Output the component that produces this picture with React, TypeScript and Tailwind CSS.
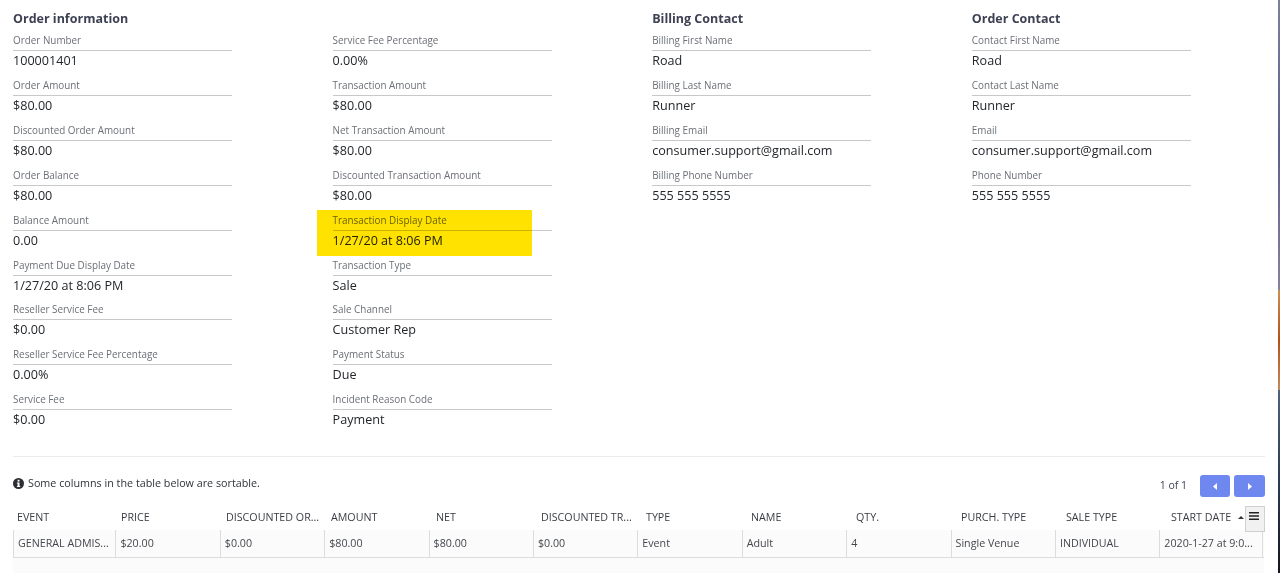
type Field = { label: string; value: string; mark?: boolean };

const orderInfo: Field[] = [
  { label: "Order Number", value: "100001401" },
  { label: "Order Amount", value: "$80.00" },
  { label: "Discounted Order Amount", value: "$80.00" },
  { label: "Order Balance", value: "$80.00" },
  { label: "Balance Amount", value: "0.00" },
  { label: "Payment Due Display Date", value: "1/27/20 at 8:06 PM" },
  { label: "Reseller Service Fee", value: "$0.00" },
  { label: "Reseller Service Fee Percentage", value: "0.00%" },
  { label: "Service Fee", value: "$0.00" },
];

const transaction: Field[] = [
  { label: "Service Fee Percentage", value: "0.00%" },
  { label: "Transaction Amount", value: "$80.00" },
  { label: "Net Transaction Amount", value: "$80.00" },
  { label: "Discounted Transaction Amount", value: "$80.00" },
  { label: "Transaction Display Date", value: "1/27/20 at 8:06 PM", mark: true },
  { label: "Transaction Type", value: "Sale" },
  { label: "Sale Channel", value: "Customer Rep" },
  { label: "Payment Status", value: "Due" },
  { label: "Incident Reason Code", value: "Payment" },
];

const billing: Field[] = [
  { label: "Billing First Name", value: "Road" },
  { label: "Billing Last Name", value: "Runner" },
  { label: "Billing Email", value: "consumer.support@gmail.com" },
  { label: "Billing Phone Number", value: "555 555 5555" },
];

const contact: Field[] = [
  { label: "Contact First Name", value: "Road" },
  { label: "Contact Last Name", value: "Runner" },
  { label: "Email", value: "consumer.support@gmail.com" },
  { label: "Phone Number", value: "555 555 5555" },
];

const columns = [
  { head: "EVENT", cell: "GENERAL ADMIS...", hw: "w-[104px]", w: "w-[102.4px]" },
  { head: "PRICE", cell: "$20.00", hw: "w-[105px]", w: "w-[104.4px]" },
  { head: "DISCOUNTED OR...", cell: "$0.00", hw: "w-[105px]", w: "w-[104.4px]" },
  { head: "AMOUNT", cell: "$80.00", hw: "w-[105px]", w: "w-[104.4px]" },
  { head: "NET", cell: "$80.00", hw: "w-[105px]", w: "w-[104.4px]" },
  { head: "DISCOUNTED TR...", cell: "$0.00", hw: "w-[105px]", w: "w-[104.4px]" },
  { head: "TYPE", cell: "Event", hw: "w-[105px]", w: "w-[104.4px]" },
  { head: "NAME", cell: "Adult", hw: "w-[105px]", w: "w-[104.4px]" },
  { head: "QTY.", cell: "4", hw: "w-[105px]", w: "w-[104.4px]" },
  { head: "PURCH. TYPE", cell: "Single Venue", hw: "w-[105px]", w: "w-[104.4px]" },
  { head: "SALE TYPE", cell: "INDIVIDUAL", hw: "w-[105px]", w: "w-[104.4px]" },
  { head: "START DATE", cell: "2020-1-27 at 9:0...", hw: "w-[75px]", w: "w-[103.8px]" },
];

function FieldBlock({ label, value, mark }: Field) {
  return (
    <div className="relative h-[44.91px] w-[219px]">
      <p className="h-[20px] border-b border-[#c8c8c8] pt-[2px] text-[9.9px] leading-[15px] text-[#6b6f76]">{label}</p>
      <p className="text-[12.6px] leading-[19px] text-[#23262b]">{value}</p>
      {mark && <div className="absolute left-[-16px] top-[-1px] h-[46.5px] w-[215px] bg-[#ffe200] mix-blend-multiply" />}
    </div>
  );
}

function Column({ title, fields }: { title?: string; fields: Field[] }) {
  return (
    <div className="w-[319.6px] shrink-0">
      <h2 className="h-[23px] pt-[1px] text-[12.5px] font-bold leading-[20px] text-[#3d4154]">{title}</h2>
      {fields.map((f) => (
        <FieldBlock key={f.label} {...f} />
      ))}
    </div>
  );
}

export default function App() {
  return (
    <div className="flex h-[573px] w-[1280px] overflow-hidden bg-white font-['Open_Sans',sans-serif]">
      <div className="w-[1278px] shrink-0">
        <div className="h-[456px] pl-[13px] pt-[8px]">
          <div className="flex">
            <Column title="Order information" fields={orderInfo} />
            <Column fields={transaction} />
            <Column title="Billing Contact" fields={billing} />
            <Column title="Order Contact" fields={contact} />
          </div>
        </div>

        <div className="ml-[13px] w-[1252px] border-t border-[#ececec]">
          <div className="flex h-[49px] items-start justify-between pt-[18px]">
            <div className="flex items-center gap-[4px] pt-[1px] text-[10.75px] leading-[15px] text-[#2f3238]">
              <svg width="11" height="11" viewBox="0 0 11 11">
                <circle cx="5.5" cy="5.5" r="5.5" fill="#2b2d33" />
                <rect x="4.6" y="1.8" width="1.9" height="1.8" fill="#fff" />
                <path d="M3.9 4.5h2.6v3.6h.7v1H3.9v-1h.7V5.5h-.7z" fill="#fff" />
              </svg>
              <span>Some columns in the table below are sortable.</span>
            </div>
            <div className="flex items-center">
              <span className="mr-[13px] text-[10.5px] text-[#3d4154]">1 of 1</span>
              <button className="mr-[4px] flex h-[22px] w-[30px] items-center justify-center rounded-[3px] bg-[#6f88f0]">
                <svg width="5" height="7" viewBox="0 0 5 7"><path d="M4 0v7L0 3.5z" fill="#fff" /></svg>
              </button>
              <button className="flex h-[22px] w-[31px] items-center justify-center rounded-[3px] bg-[#6f88f0]">
                <svg width="5" height="7" viewBox="0 0 5 7"><path d="M1 0v7l4-3.5z" fill="#fff" /></svg>
              </button>
            </div>
          </div>

          <div className="relative">
            <div className="flex h-[24px] w-[1251px] items-center pb-[2px]">
              {columns.map((c) => (
                <div key={c.head} className={`${c.hw} flex shrink-0 items-center pl-[4px] text-[10.7px] text-[#3a3d44]`}>
                  {c.head}
                </div>
              ))}
            </div>
            <div className="flex h-[28px] w-[1251px] border-b border-[#dcdcdc] bg-[#fbfbfb]">
              {columns.map((c) => (
                <div
                  key={c.head}
                  className={`${c.w} shrink-0 border-l border-[#dcdcdc] pl-[4px] text-[10.7px] leading-[26px] text-[#44474d] last:border-r`}
                >
                  {c.cell}
                </div>
              ))}
            </div>
            <svg className="absolute left-[1225px] top-[10px]" width="6" height="3" viewBox="0 0 6 3"><path d="M0 3l3-3 3 3z" fill="#333" /></svg>
            <button className="absolute left-[1232px] top-0 flex h-[26px] w-[20px] justify-center border border-[#d0d0d0] bg-[#f1f1f1] pr-[3px] pt-[5px]">
              <svg width="10" height="8" viewBox="0 0 10 8">
                <path d="M0 0h10v1.6H0zM0 3.2h10v1.6H0zM0 6.4h10V8H0z" fill="#222" />
              </svg>
            </button>
          </div>

          <div className="h-[16px] w-[1251px] bg-[#fbfbfb]" />
        </div>
      </div>

      {/* sliver of desktop wallpaper showing past the window edge */}
      <div className="flex w-[2px] shrink-0 flex-col">
        <div className="h-[290px] bg-gradient-to-b from-[#7d7f9f] via-[#5f5f8e] to-[#85819f]" />
        <div className="h-[100px] bg-gradient-to-b from-[#c98f50] via-[#b5500f] to-[#c08a5a]" />
        <div className="flex-1 bg-gradient-to-b from-[#4f6280] via-[#2b3a55] to-[#14161f]" />
      </div>
    </div>
  );
}
